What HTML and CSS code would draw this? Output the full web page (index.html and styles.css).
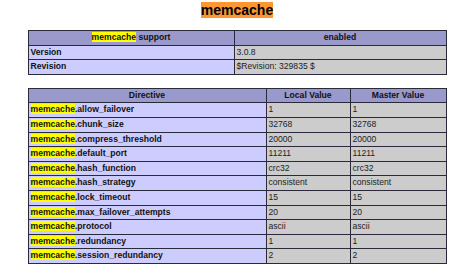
FILE: index.html
```html
<!DOCTYPE html>
<html>
<head>
<meta charset="utf-8">
<link rel="stylesheet" href="styles.css">
</head>
<body>
<div class="page">
  <h2 class="title"><span class="hl-active">memcache</span></h2>
  <table class="info support">
    <colgroup><col class="c-sup1"><col class="c-sup2"></colgroup>
    <tr class="h"><th><span class="hl">memcache</span> support</th><th>enabled</th></tr>
    <tr><td class="e">Version</td><td class="v">3.0.8</td></tr>
    <tr><td class="e">Revision</td><td class="v">$Revision: 329835 $</td></tr>
  </table>
  <table class="info directives">
    <colgroup><col class="c-dir"><col class="c-local"><col class="c-master"></colgroup>
    <tr class="h"><th>Directive</th><th>Local Value</th><th>Master Value</th></tr>
    <tr><td class="e"><span class="hl">memcache</span>.allow_failover</td><td class="v">1</td><td class="v">1</td></tr>
    <tr><td class="e"><span class="hl">memcache</span>.chunk_size</td><td class="v">32768</td><td class="v">32768</td></tr>
    <tr><td class="e"><span class="hl">memcache</span>.compress_threshold</td><td class="v">20000</td><td class="v">20000</td></tr>
    <tr><td class="e"><span class="hl">memcache</span>.default_port</td><td class="v">11211</td><td class="v">11211</td></tr>
    <tr><td class="e"><span class="hl">memcache</span>.hash_function</td><td class="v">crc32</td><td class="v">crc32</td></tr>
    <tr><td class="e"><span class="hl">memcache</span>.hash_strategy</td><td class="v">consistent</td><td class="v">consistent</td></tr>
    <tr><td class="e"><span class="hl">memcache</span>.lock_timeout</td><td class="v">15</td><td class="v">15</td></tr>
    <tr><td class="e"><span class="hl">memcache</span>.max_failover_attempts</td><td class="v">20</td><td class="v">20</td></tr>
    <tr><td class="e"><span class="hl">memcache</span>.protocol</td><td class="v">ascii</td><td class="v">ascii</td></tr>
    <tr><td class="e"><span class="hl">memcache</span>.redundancy</td><td class="v">1</td><td class="v">1</td></tr>
    <tr><td class="e"><span class="hl">memcache</span>.session_redundancy</td><td class="v">2</td><td class="v">2</td></tr>
  </table>
</div>
</body>
</html>
```
FILE: styles.css
```css
html, body {
  margin: 0;
  background: #ffffff;
}
body {
  font-family: "Liberation Sans", Arial, sans-serif;
  color: #000;
}
.page {
  padding-top: 2px;
}
.title {
  margin: 0 0 12px;
  text-align: center;
  font-size: 14px;
  line-height: 16px;
  font-weight: bold;
}
.hl-active {
  background: #ff9632;
}
.hl {
  background: #ffff00;
}
.info {
  border-collapse: collapse;
  width: 418px;
  margin: 0 auto;
  table-layout: fixed;
}
.support {
  margin-bottom: 13px;
}
.info th,
.info td {
  border: 1px solid #2a2a3a;
  font-size: 8.6px;
  line-height: 9.6px;
  padding: 2px 2px;
  vertical-align: baseline;
  text-align: left;
  white-space: nowrap;
}
.info .h th {
  background: #9999cc;
  font-weight: bold;
  text-align: center;
  color: #111;
}
.info .e {
  background: #ccccff;
  font-weight: bold;
  color: #111;
}
.info .v {
  background: #cccccc;
  color: #222;
}
.c-sup1 { width: 206px; }
.c-sup2 { width: 212px; }
.c-dir { width: 238px; }
.c-local { width: 84px; }
.c-master { width: 96px; }
```
